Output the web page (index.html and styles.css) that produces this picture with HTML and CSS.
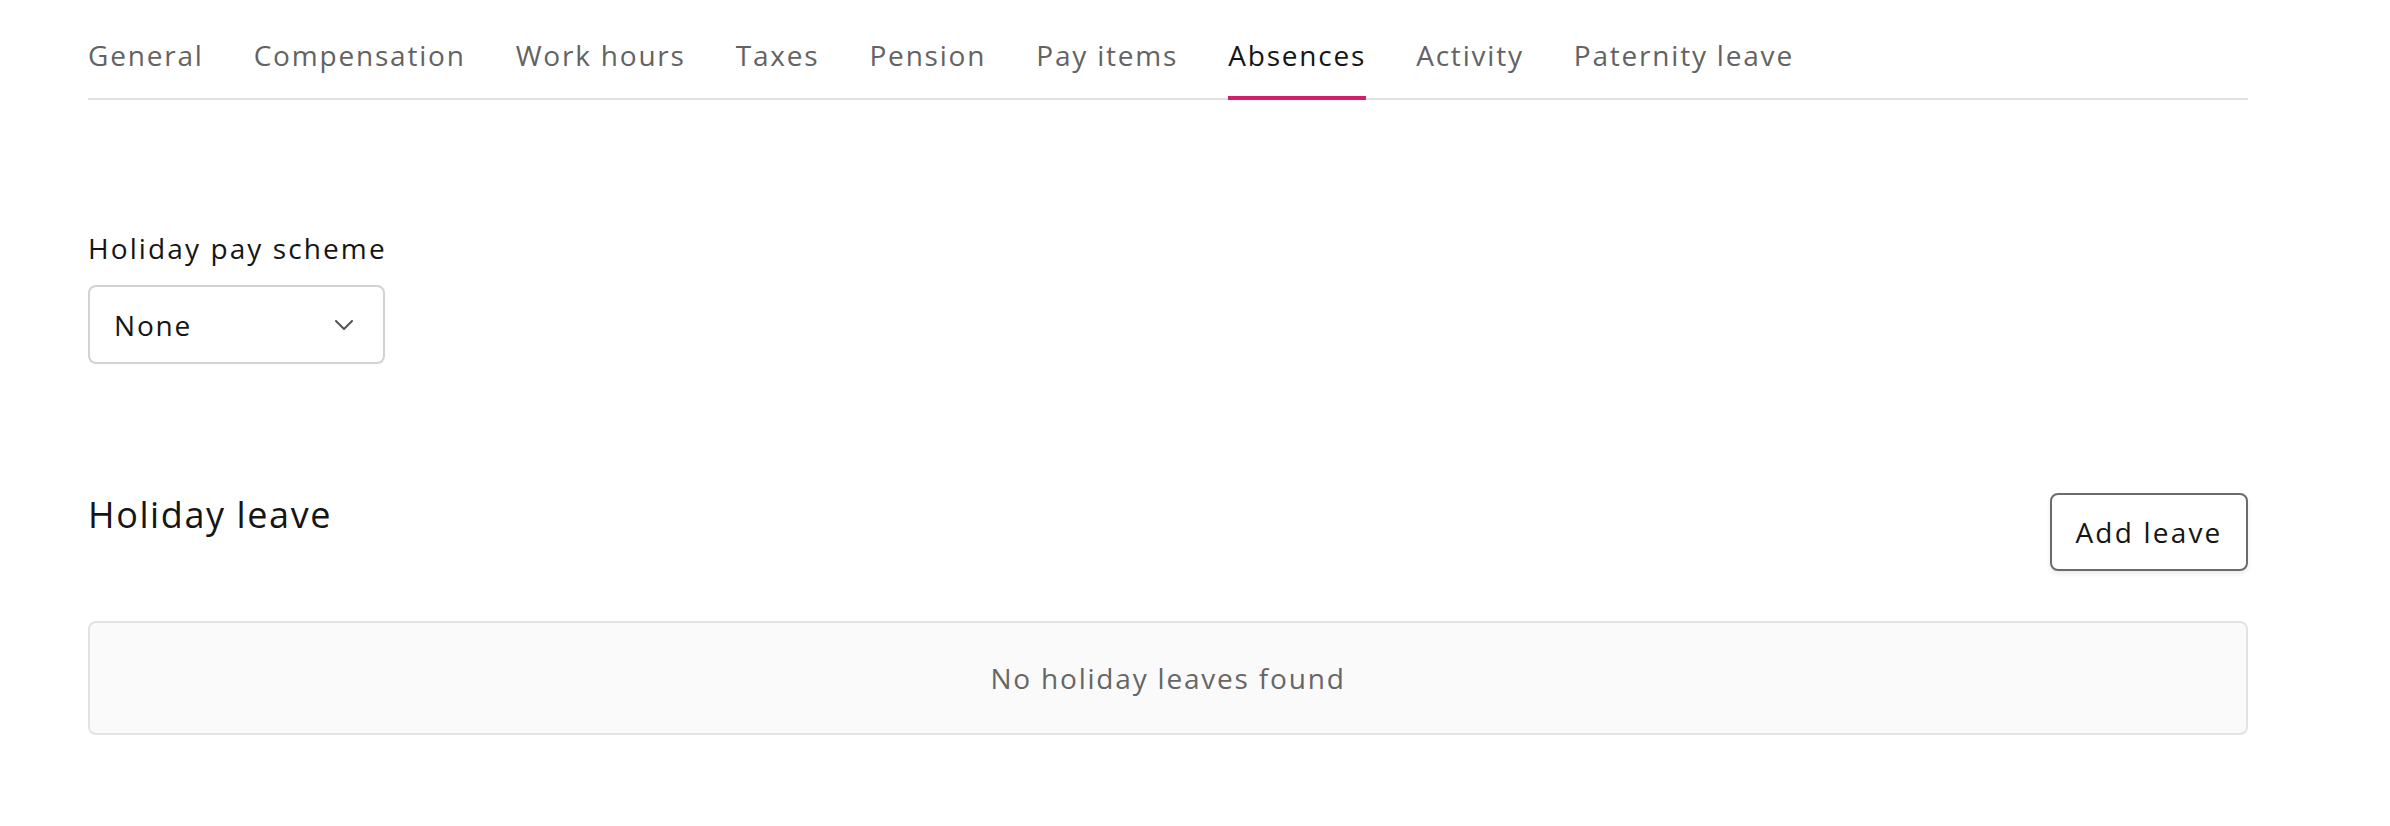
FILE: index.html
```html
<!DOCTYPE html>
<html lang="en">
<head>
<meta charset="utf-8">
<title>Absences</title>
<link rel="stylesheet" href="styles.css">
</head>
<body>
<main class="page">
  <nav class="tabs">
    <a class="tab">General</a>
    <a class="tab">Compensation</a>
    <a class="tab">Work hours</a>
    <a class="tab">Taxes</a>
    <a class="tab">Pension</a>
    <a class="tab">Pay items</a>
    <a class="tab tab-active">Absences</a>
    <a class="tab">Activity</a>
    <a class="tab">Paternity leave</a>
  </nav>

  <section class="field">
    <label class="field-label">Holiday pay scheme</label>
    <div class="select">
      <span class="select-value">None</span>
      <svg class="chevron" width="18" height="10" viewBox="0 0 18 10" aria-hidden="true"><polyline points="1,1 9,9 17,1" fill="none" stroke="#555" stroke-width="2" stroke-linecap="round" stroke-linejoin="round"/></svg>
    </div>
  </section>

  <section class="leave">
    <div class="leave-head">
      <h2 class="leave-title">Holiday leave</h2>
      <button class="btn">Add leave</button>
    </div>
    <div class="empty">No holiday leaves found</div>
  </section>
</main>
</body>
</html>
```

FILE: styles.css
```css
* { box-sizing: border-box; }
html, body { margin: 0; padding: 0; background: #ffffff; }
body {
  font-family: "Open Sans", "Liberation Sans", sans-serif;
  color: #1a1a1a;
  letter-spacing: 1.8px;
}
.page {
  width: 2160px;
  margin-left: 88px;
}
.tabs {
  display: flex;
  gap: 50px;
  border-bottom: 2px solid #e1e1e1;
}
.tab {
  font-size: 28px;
  line-height: 40px;
  padding-top: 35px;
  padding-bottom: 21px;
  border-bottom: 4px solid transparent;
  margin-bottom: -2px;
  color: #636363;
  white-space: nowrap;
  letter-spacing: 1.8px;
}
.tab-active {
  color: #151515;
  border-bottom-color: #d11f6c;
}
.field {
  margin-top: 131px;
  display: flex;
  flex-direction: column;
  align-items: flex-start;
}
.field-label {
  font-size: 28px;
  line-height: 34px;
  color: #151515;
  font-weight: 500;
  letter-spacing: 2.1px;
}
.select {
  margin-top: 20px;
  width: 297px;
  height: 79px;
  border: 2px solid #d2d2d2;
  border-radius: 8px;
  display: flex;
  align-items: center;
  justify-content: space-between;
  padding: 0 30px 0 24px;
}
.select-value {
  font-size: 28px;
  line-height: 34px;
  color: #151515;
}
.leave { margin-top: 129px; }
.leave-head {
  display: flex;
  justify-content: space-between;
  align-items: flex-start;
}
.leave-title {
  margin: 0;
  font-size: 36px;
  line-height: 44px;
  font-weight: 500;
  color: #151515;
  letter-spacing: 1.6px;
}
.btn {
  font-family: inherit;
  font-size: 28px;
  line-height: 34px;
  letter-spacing: 2.2px;
  color: #151515;
  background: #ffffff;
  width: 198px;
  height: 78px;
  border: 2px solid #6b6b6b;
  border-radius: 8px;
  padding: 0;
  box-shadow: 0 3px 5px rgba(0, 0, 0, 0.08);
}
.empty {
  margin-top: 50px;
  height: 114px;
  background: #fafafa;
  border: 2px solid #e3e3e3;
  border-radius: 8px;
  display: flex;
  align-items: center;
  justify-content: center;
  font-size: 28px;
  line-height: 34px;
  color: #666666;
}
```
